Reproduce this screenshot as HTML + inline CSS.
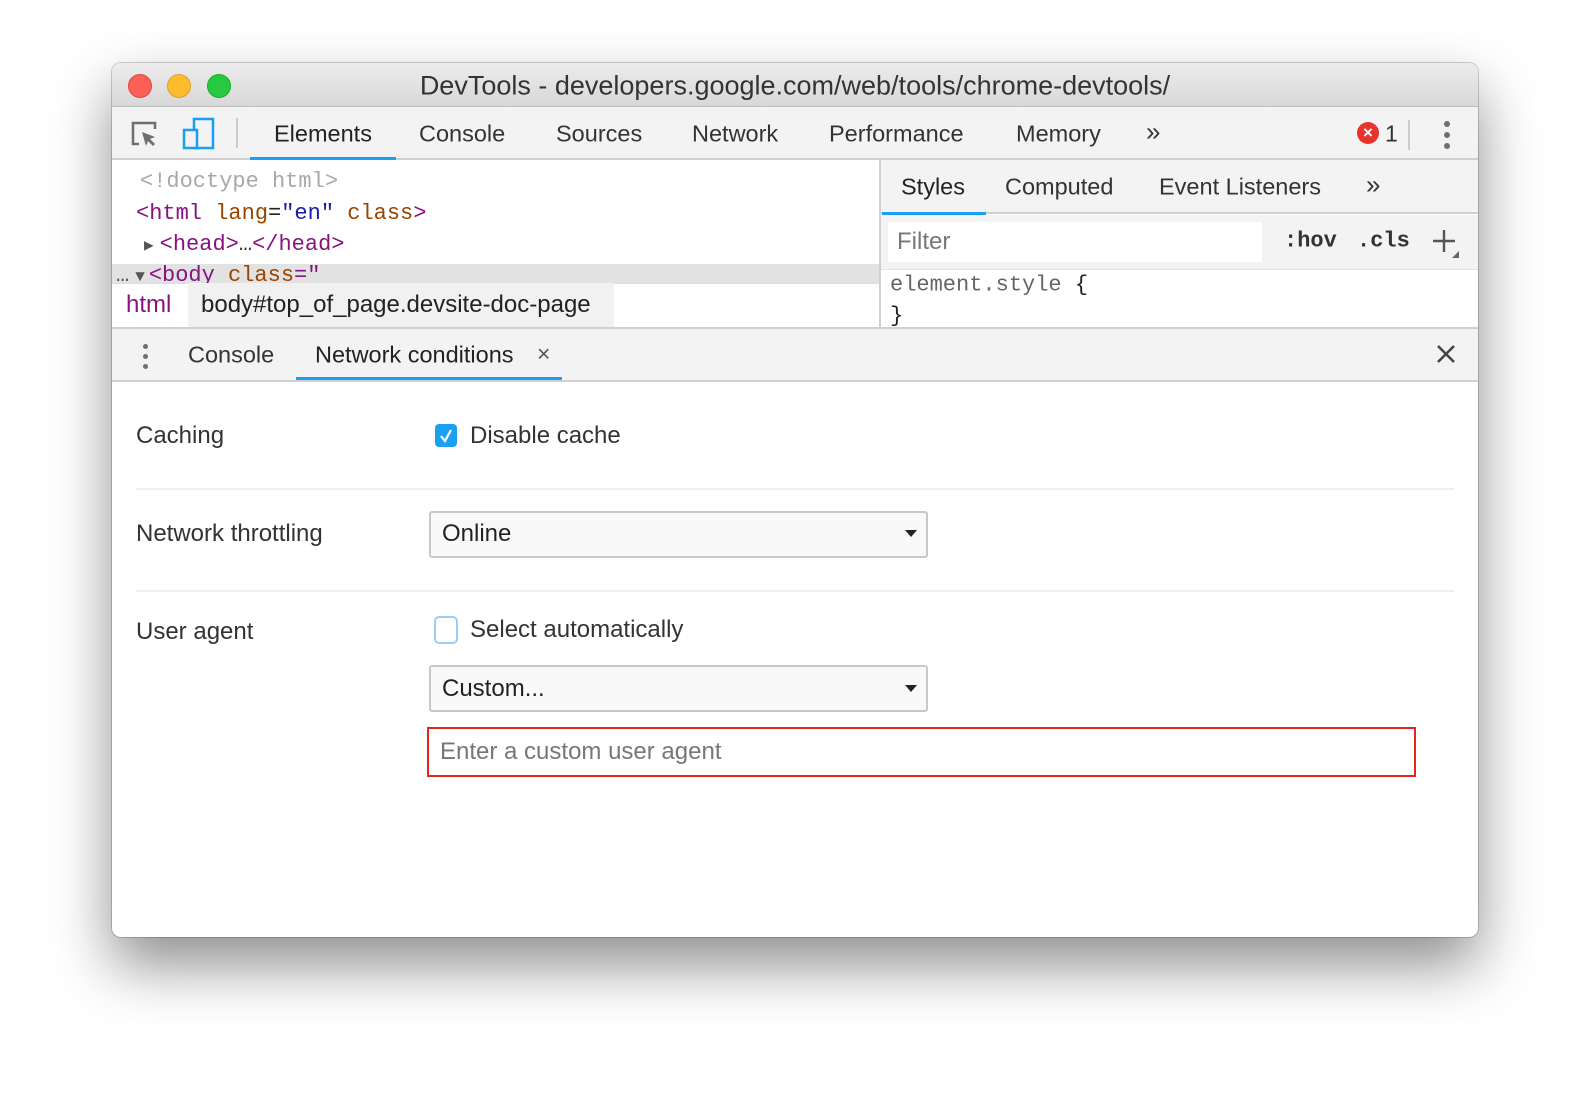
<!DOCTYPE html>
<html><head><meta charset="utf-8">
<style>
*{box-sizing:border-box;margin:0;padding:0}
body{width:1590px;height:1098px;background:#fff;position:relative;overflow:hidden;font-family:"Liberation Sans",sans-serif;color:#222}
.a{position:absolute;white-space:nowrap}
.win{position:absolute;left:112px;top:63px;width:1366px;height:874px;border-radius:9px;background:#fff;box-shadow:0 28px 60px rgba(0,0,0,.45),0 0 0 1px rgba(0,0,0,.18);overflow:hidden}
.mono{font-family:"Liberation Mono",monospace}
.t{font-size:24px;color:#333;transform:translateY(-50%)}
.dot{position:absolute;width:24px;height:24px;border-radius:50%}
</style></head><body>
<div class="win">
  <div class="a" style="left:0;top:0;width:1366px;height:44px;background:linear-gradient(#ececec,#d8d8d8);border-bottom:1px solid #bdbdbd"></div>
  <div class="dot" style="left:16px;top:11px;background:#fc5f57;border:1px solid #e0443e"></div>
  <div class="dot" style="left:55px;top:11px;background:#fdbc2e;border:1px solid #dea123"></div>
  <div class="dot" style="left:95px;top:11px;background:#28c840;border:1px solid #1aab29"></div>
  <div class="a" style="left:0;width:1366px;top:23px;text-align:center;font-size:27px;color:#333;transform:translateY(-50%)">DevTools - developers.google.com/web/tools/chrome-devtools/</div>

  <div class="a" style="left:0;top:44px;width:1366px;height:53px;background:#f3f3f3;border-bottom:2px solid #d0d0d0"></div>
  <svg class="a" style="left:18px;top:57px" width="30" height="30" viewBox="0 0 30 30"><path d="M9 24H3V3h22v6" fill="none" stroke="#6e6e6e" stroke-width="2.5"/><path d="M12 12l13 5-5 2 5 5-2 2-5-5-2 5z" fill="#6e6e6e"/></svg>
  <svg class="a" style="left:70px;top:54px" width="34" height="34" viewBox="0 0 34 34"><rect x="12" y="2" width="19" height="29" fill="none" stroke="#1a9ff1" stroke-width="2.5"/><rect x="2" y="13" width="13" height="18" fill="#f3f3f3" stroke="#1a9ff1" stroke-width="2.5"/></svg>
  <div class="a" style="left:124px;top:55px;width:2px;height:30px;background:#ccc"></div>
  <div class="a t" style="left:162px;top:71px;color:#222;font-size:23.5px">Elements</div>
  <div class="a" style="left:138px;top:94px;width:146px;height:3px;background:#1a9ff1"></div>
  <div class="a t" style="left:307px;top:71px;font-size:23.5px">Console</div>
  <div class="a t" style="left:444px;top:71px;font-size:23.5px">Sources</div>
  <div class="a t" style="left:580px;top:71px;font-size:23.5px">Network</div>
  <div class="a t" style="left:717px;top:71px;font-size:23.5px">Performance</div>
  <div class="a t" style="left:904px;top:71px;font-size:23.5px">Memory</div>
  <div class="a t" style="left:1034px;top:69px;font-size:26px">»</div>
  <div class="a" style="left:1245px;top:59px;width:22px;height:22px;border-radius:50%;background:#e8322c;color:#fff;font-size:17px;font-weight:bold;text-align:center;line-height:22px">×</div>
  <div class="a t" style="left:1273px;top:71px;font-size:23px">1</div>
  <div class="a" style="left:1296px;top:57px;width:2px;height:30px;background:#ccc"></div>
  <div class="a" style="left:1332px;top:58px;width:6px;height:6px;border-radius:50%;background:#6e6e6e;box-shadow:0 11px 0 #6e6e6e,0 22px 0 #6e6e6e"></div>

  <div class="a" style="left:0;top:97px;width:768px;height:123px;background:#fff"></div>
  <div class="a" style="left:0;top:201px;width:768px;height:20px;background:#e2e2e2"></div>
  <div class="a mono" style="left:28px;top:106px;font-size:22px;color:#a8a8a8;line-height:26px">&lt;!doctype html&gt;</div>
  <div class="a mono" style="left:24px;top:138px;font-size:22px;line-height:26px"><span style="color:#881280">&lt;html</span> <span style="color:#994500">lang</span>=<span style="color:#1a1aa6">"en"</span> <span style="color:#994500">class</span><span style="color:#881280">&gt;</span></div>
  <div class="a mono" style="left:32px;top:169px;font-size:22px;line-height:26px;color:#881280"><span style="color:#555;font-size:16px;margin-right:6px">▶</span>&lt;head&gt;<span style="color:#333">…</span>&lt;/head&gt;</div>
  <div class="a" style="left:0;top:201px;width:768px;height:20px;overflow:hidden"><div class="mono" style="position:absolute;left:4px;top:-1px;font-size:22px;line-height:26px;color:#881280;white-space:nowrap"><span style="color:#555">…</span><span style="color:#555;font-size:16px;margin:0 4px 0 6px">▼</span>&lt;body <span style="color:#994500">class</span>="</div></div>
  <div class="a" style="left:0;top:220px;width:768px;height:45px;background:#fff;border-top:1px solid #ddd"></div>
  <div class="a t" style="left:14px;top:242px;color:#881280">html</div>
  <div class="a" style="left:76px;top:220px;width:426px;height:45px;background:#f1f1f1"></div>
  <div class="a t" style="left:89px;top:242px;color:#222">body#top_of_page.devsite-doc-page</div>
  <div class="a" style="left:767px;top:97px;width:2px;height:168px;background:#d0d0d0"></div>

  <div class="a" style="left:769px;top:97px;width:597px;height:54px;background:#f3f3f3;border-bottom:2px solid #d0d0d0"></div>
  <div class="a t" style="left:789px;top:124px;color:#222;font-size:23.5px">Styles</div>
  <div class="a" style="left:770px;top:149px;width:104px;height:3px;background:#1a9ff1"></div>
  <div class="a t" style="left:893px;top:124px;font-size:23.5px">Computed</div>
  <div class="a t" style="left:1047px;top:124px;font-size:23.5px">Event Listeners</div>
  <div class="a t" style="left:1254px;top:122px;font-size:26px">»</div>
  <div class="a" style="left:769px;top:152px;width:597px;height:55px;background:#f3f3f3;border-bottom:1px solid #e4e4e4"></div>
  <div class="a" style="left:776px;top:159px;width:374px;height:40px;background:#fff"></div>
  <div class="a t" style="left:785px;top:179px;color:#777">Filter</div>
  <div class="a mono t" style="left:1172px;top:178px;font-weight:bold;font-size:22px;color:#333">:hov</div>
  <div class="a mono t" style="left:1245px;top:178px;font-weight:bold;font-size:22px;color:#333">.cls</div>
  <svg class="a" style="left:1321px;top:165px" width="26" height="30" viewBox="0 0 26 30"><path d="M11 2v22M0 13h22" stroke="#555" stroke-width="2.4"/><path d="M26 23v7h-7z" fill="#666"/></svg>
  <div class="a mono t" style="left:778px;top:222px;font-size:22px;color:#666">element.style <span style="color:#222">{</span></div>
  <div class="a mono t" style="left:778px;top:253px;font-size:22px;color:#222">}</div>

  <div class="a" style="left:0;top:264px;width:1366px;height:55px;background:#f3f3f3;border-top:2px solid #d0d0d0;border-bottom:2px solid #d0d0d0"></div>
  <div class="a" style="left:31px;top:281px;width:5px;height:5px;border-radius:50%;background:#6e6e6e;box-shadow:0 10px 0 #6e6e6e,0 20px 0 #6e6e6e"></div>
  <div class="a t" style="left:76px;top:292px;font-size:23.5px">Console</div>
  <div class="a t" style="left:203px;top:292px;font-size:23.5px;color:#222">Network conditions</div>
  <div class="a t" style="left:425px;top:291px;font-size:23px;color:#555">×</div>
  <div class="a" style="left:184px;top:314px;width:266px;height:3px;background:#1a9ff1"></div>
  <svg class="a" style="left:1324px;top:281px" width="20" height="20" viewBox="0 0 20 20"><path d="M2 2L18 18M18 2L2 18" stroke="#444" stroke-width="2.6"/></svg>

  <div class="a t" style="left:24px;top:373px">Caching</div>
  <div class="a" style="left:323px;top:361px;width:22px;height:23px;border-radius:4px;background:#1a9ff1"></div>
  <svg class="a" style="left:326px;top:364px" width="16" height="17" viewBox="0 0 16 17"><path d="M3 9l4 5 6-11" fill="none" stroke="#fff" stroke-width="2.2"/></svg>
  <div class="a t" style="left:358px;top:373px">Disable cache</div>
  <div class="a" style="left:24px;top:425px;width:1318px;height:2px;background:#eee"></div>

  <div class="a t" style="left:24px;top:471px">Network throttling</div>
  <div class="a" style="left:317px;top:448px;width:499px;height:47px;border:2px solid #c8c8c8;border-radius:3px;background:#f9f9f9"></div>
  <div class="a t" style="left:330px;top:471px;color:#222">Online</div>
  <div class="a" style="left:793px;top:467px;width:0;height:0;border-left:6px solid transparent;border-right:6px solid transparent;border-top:7px solid #222"></div>
  <div class="a" style="left:24px;top:527px;width:1318px;height:2px;background:#eee"></div>

  <div class="a t" style="left:24px;top:569px">User agent</div>
  <div class="a" style="left:322px;top:553px;width:24px;height:28px;border-radius:5px;border:2px solid #9ccdf4;background:#fff"></div>
  <div class="a t" style="left:358px;top:567px">Select automatically</div>
  <div class="a" style="left:317px;top:602px;width:499px;height:47px;border:2px solid #c8c8c8;border-radius:3px;background:#f9f9f9"></div>
  <div class="a t" style="left:330px;top:626px;color:#222">Custom...</div>
  <div class="a" style="left:793px;top:622px;width:0;height:0;border-left:6px solid transparent;border-right:6px solid transparent;border-top:7px solid #222"></div>
  <div class="a" style="left:315px;top:664px;width:989px;height:50px;border:2px solid #e8231c;background:#fff"></div>
  <div class="a t" style="left:328px;top:689px;color:#777">Enter a custom user agent</div>
</div>
</body></html>
